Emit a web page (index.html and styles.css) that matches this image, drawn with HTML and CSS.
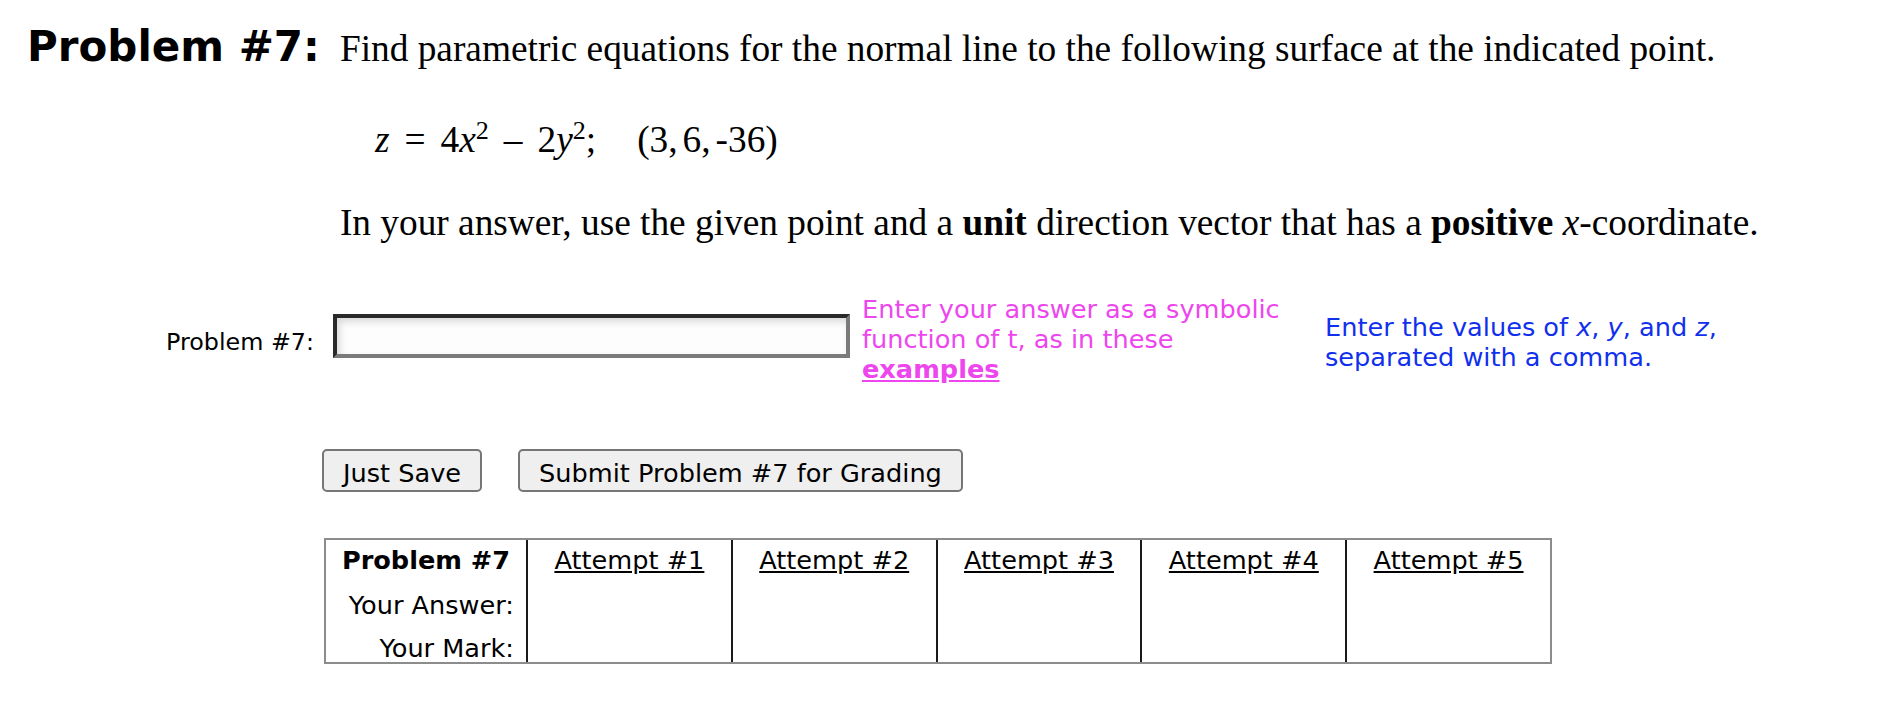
FILE: index.html
```html
<!DOCTYPE html>
<html lang="en">
<head>
<meta charset="utf-8">
<title>Problem #7</title>
<link rel="stylesheet" href="styles.css">
</head>
<body>
<div class="problem">
  <div class="head">
    <h1 class="ptitle">Problem #7:</h1>
    <div class="statement">
      <p class="line">Find parametric equations for the normal line to the following surface at the indicated point.</p>
      <p class="line eq"><i>z</i><span class="op">=</span>4<i>x</i><sup>2</sup><span class="op">–</span>2<i>y</i><sup>2</sup>;<span class="pt">(3,<span class="thin"></span>6,<span class="thin"></span>-36)</span></p>
      <p class="line line3">In your answer, use the given point and a <b>unit</b> direction vector that has a <b>positive</b> <i>x</i>-coordinate.</p>
    </div>
  </div>

  <div class="answer">
    <label class="alabel" for="ans">Problem #7:</label>
    <input id="ans" class="ainput" type="text">
    <div class="hint-pink">Enter your answer as a symbolic function of t, as in these <a class="ex" href="#">examples</a></div>
    <div class="hint-blue"><span class="bl">Enter the values of <i>x</i>, <i>y</i>, and <i>z</i>,</span><br><span class="bl">separated with a comma.</span></div>
  </div>

  <div class="buttons">
    <button class="btn" type="button">Just Save</button>
    <button class="btn" type="button">Submit Problem #7 for Grading</button>
  </div>

  <table class="attempts">
    <tr class="r1">
      <th class="first">Problem #7</th>
      <th><a class="att" href="#">Attempt #1</a></th>
      <th><a class="att" href="#">Attempt #2</a></th>
      <th><a class="att" href="#">Attempt #3</a></th>
      <th><a class="att" href="#">Attempt #4</a></th>
      <th><a class="att" href="#">Attempt #5</a></th>
    </tr>
    <tr class="r2">
      <td class="first">Your Answer:</td>
      <td></td><td></td><td></td><td></td><td></td>
    </tr>
    <tr class="r3">
      <td class="first">Your Mark:</td>
      <td></td><td></td><td></td><td></td><td></td>
    </tr>
  </table>
</div>
</body>
</html>
```

FILE: styles.css
```css
html, body {
  margin: 0;
  padding: 0;
  background: #ffffff;
}

body {
  font-family: "DejaVu Sans", Verdana, sans-serif;
  font-size: 25.6px;
  color: #000000;
}

.head {
  display: flex;
  align-items: baseline;
  padding: 25px 0 0 27px;
}

.ptitle {
  margin: 0;
  font-family: "DejaVu Sans", Verdana, sans-serif;
  font-weight: bold;
  font-size: 42px;
  line-height: 43px;
  white-space: nowrap;
}

.statement {
  margin-left: 20px;
  font-family: "Liberation Serif", "Times New Roman", serif;
  font-size: 37.35px;
  line-height: 43px;
  white-space: nowrap;
}

.line {
  margin: 0;
}

.eq {
  margin: 48px 0 0 35px;
}

.eq .op {
  margin: 0 15px;
}

.eq sup {
  font-size: 0.7em;
  line-height: 0;
  vertical-align: 0.48em;
}

.eq .pt {
  margin-left: 41px;
}

.eq .thin {
  display: inline-block;
  width: 5px;
}

.line3 {
  margin-top: 40px;
}

.answer {
  display: flex;
  align-items: flex-start;
  margin-top: 48px;
  padding-left: 150px;
}

.alabel {
  flex: none;
  width: 164px;
  margin-top: 36px;
  text-align: right;
  font-size: 23.8px;
}

.ainput {
  flex: none;
  margin: 22px 0 0 19px;
  width: 517px;
  height: 44px;
  box-sizing: border-box;
  border: 4px solid;
  border-color: #2a2a2a #7b7b7b #7b7b7b #2a2a2a;
  background: #fdfdfd;
  box-shadow: inset 3px 4px 7px rgba(0, 0, 0, 0.14);
  padding: 0 6px;
  font: inherit;
}

.hint-pink {
  flex: none;
  margin: 2px 0 0 12px;
  width: 440px;
  line-height: 30px;
  color: #ee46ee;
}

.hint-pink .ex {
  color: #ee46ee;
  font-weight: bold;
  text-decoration: underline;
}

.hint-blue {
  flex: none;
  margin: 20px 0 0 23px;
  width: 420px;
  line-height: 30px;
  color: #1030ee;
}

.hint-blue .bl {
  white-space: nowrap;
}

.buttons {
  display: flex;
  gap: 36px;
  margin-top: 65px;
  padding-left: 322px;
}

.btn {
  font-family: "DejaVu Sans", Verdana, sans-serif;
  font-size: 25.6px;
  height: 43px;
  box-sizing: border-box;
  padding: 5px 19px 0;
  border: 2px solid #767676;
  border-radius: 5px;
  background: #efefef;
  color: #000000;
}

.attempts {
  margin: 46px 0 0 324px;
  border-collapse: separate;
  border-spacing: 0;
  border: 2px solid #8c8c8c;
  table-layout: fixed;
  width: 1228px;
}

.attempts th,
.attempts td {
  padding: 0;
  font-size: 25.6px;
  white-space: nowrap;
  vertical-align: top;
}

.attempts .r1 th {
  height: 41px;
  line-height: 41px;
}

.attempts .r2 td {
  padding-top: 7px;
  height: 34px;
  line-height: 34px;
}

.attempts .r3 td {
  padding-top: 12px;
  height: 28px;
  line-height: 28px;
}

.attempts th {
  font-weight: normal;
  text-align: center;
}

.attempts th.first {
  width: 200px;
  font-weight: bold;
}

.attempts td.first {
  text-align: right;
  padding-right: 12px;
}

.attempts th + th,
.attempts td + td {
  border-left: 2px solid #1a1a1a;
}

.att {
  color: #000000;
  text-decoration: underline;
}
```
